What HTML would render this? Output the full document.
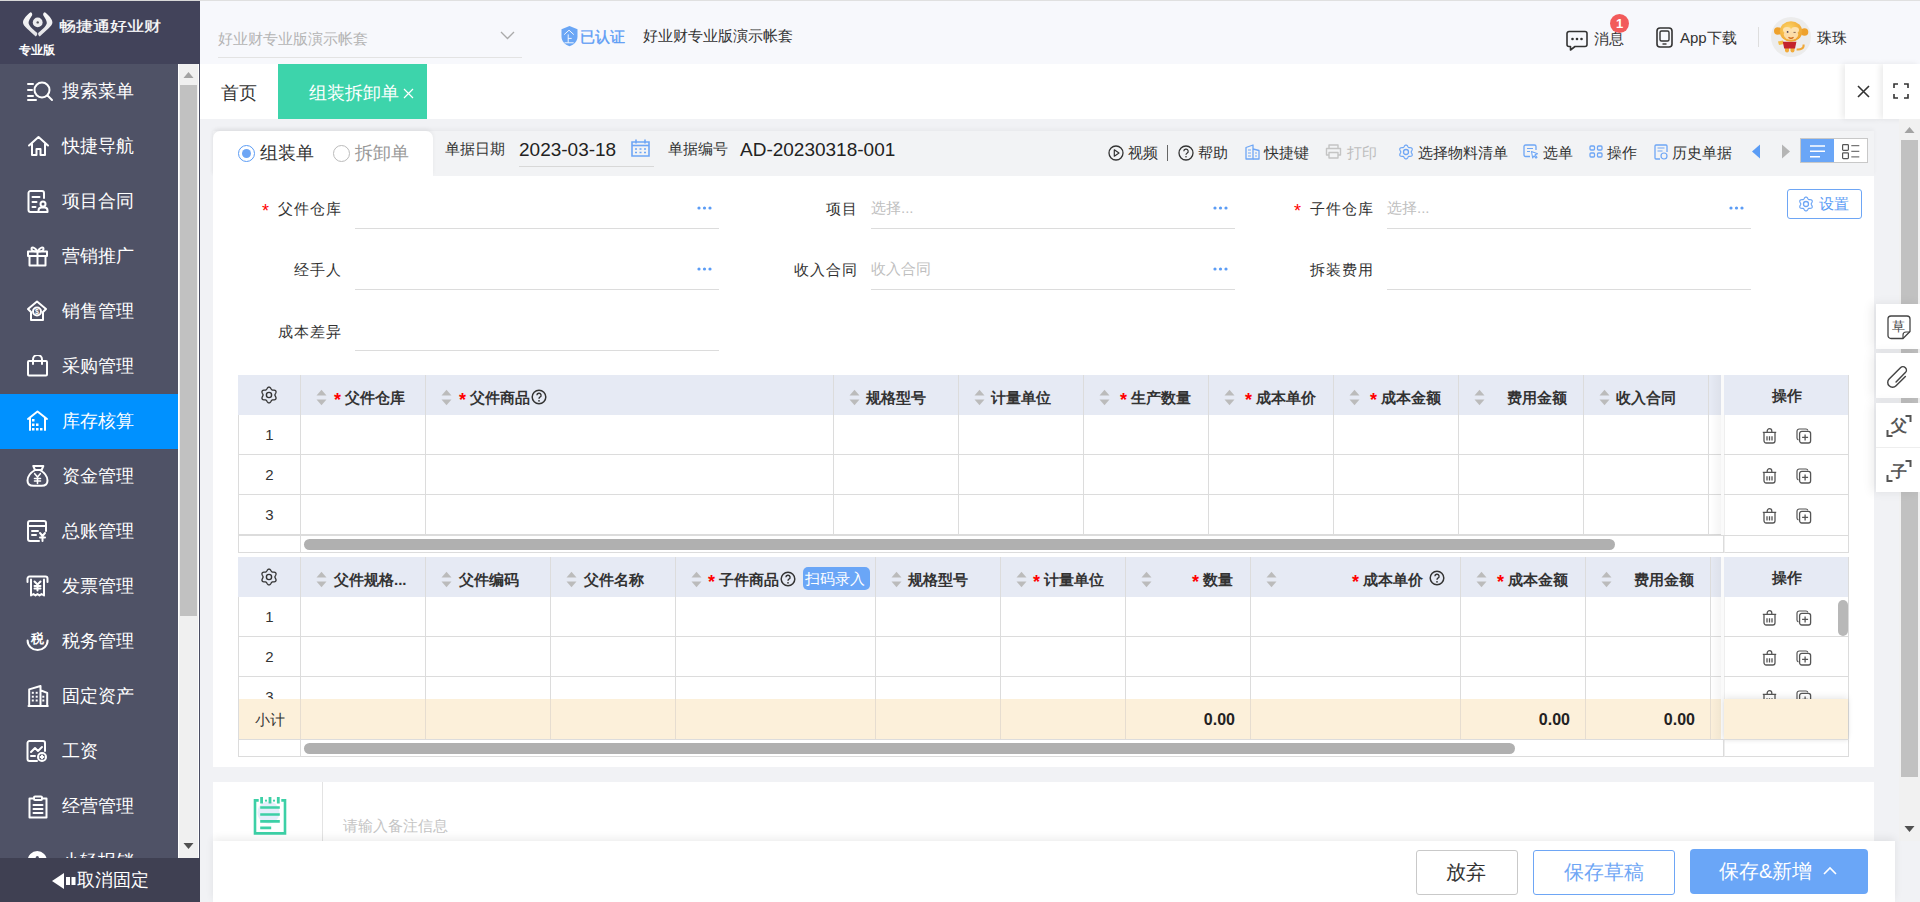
<!DOCTYPE html>
<html><head><meta charset="utf-8">
<style>
*{box-sizing:border-box;margin:0;padding:0}
html,body{width:1920px;height:902px;overflow:hidden;background:#f1f2f5;font-family:"Liberation Sans",sans-serif;color:#333}
.a{position:absolute}
.t{position:absolute;white-space:nowrap;line-height:1}
svg{display:block}
/* sidebar */
#side{left:0;top:0;width:200px;height:902px;background:#4f5266}
#logo{left:0;top:0;width:200px;height:64px;background:#42435a;border-top:1px solid #d8d8d8}
.mi{position:absolute;left:0;width:178px;height:55px;color:#fff;font-size:18px}
.mi .tx{position:absolute;left:62px;top:17px;line-height:20px}
.mi svg{position:absolute;left:26px;top:16px}
.mi.act{background:#0091ff}
#sbar{left:178px;top:64px;width:21px;height:794px;background:#f0f0f0;border-left:1px solid #fff;border-right:1px solid #fff}
#sline{left:199px;top:64px;width:1px;height:838px;background:#4b4e63}
#unpin{left:0;top:858px;width:200px;height:44px;background:#3f4052;color:#fff;font-size:19px}
/* header */
#hdr{left:200px;top:0;width:1720px;height:64px;background:#f7f8fc;border-top:1px solid #e0e0e0}
#tabs{left:200px;top:64px;width:1720px;height:55px;background:#fff}
/* content */
#card{left:213px;top:176px;width:1661px;height:591px;background:#fff}
#tb{left:213px;top:131px;width:1661px;height:45px;background:#f2f3f5;box-shadow:0 -2px 4px rgba(0,0,0,0.04)}
#tbw{left:213px;top:131px;width:220px;height:45px;background:#fff;border-radius:7px 7px 0 0;box-shadow:0 -2px 4px rgba(0,0,0,0.05)}
.lb{position:absolute;font-size:15px;color:#333;text-align:right;line-height:16px}
.ul{position:absolute;height:1px;background:#dcdcdc}
.dots{position:absolute;font-size:15px;color:#6a9ff5;letter-spacing:0}
.ph{position:absolute;font-size:15px;color:#bfbfbf;line-height:16px}
.req{color:#f00}
/* tables */
.tbl{position:absolute;left:238px;width:1611px;background:#fff;border-left:1px solid #dcdcdc;border-right:1px solid #dcdcdc}
.th{position:absolute;top:0;height:40px;background:#e6eaf4}
.vl{position:absolute;width:1px;background:#dcdcdc}
.hl{position:absolute;height:1px;background:#dcdcdc}
.hd{position:absolute;font-size:15px;font-weight:bold;color:#333;line-height:16px;white-space:nowrap}
.sort{position:absolute;width:10px;height:16px}
.num{position:absolute;font-size:15px;color:#333;line-height:16px;width:62px;text-align:center}
</style></head><body>
<!-- SIDEBAR -->
<div id="side" class="a"></div>
<div id="logo" class="a"></div>
<div id="sbar" class="a"></div>
<div id="sline" class="a"></div>
<div id="unpin" class="a"></div>
<div id="menu" class="a" style="left:0;top:64px;width:178px;height:794px;overflow:hidden">
<div class="mi" style="top:0px"><svg width="28" height="22" viewBox="0 0 28 22"><g stroke="#fff" stroke-width="2" fill="none" stroke-linecap="round" stroke-linejoin="round"><path d="M2 4h5M2 10h4M2 16h5M2 20h8"/><circle cx="16" cy="10" r="7.5"/><path d="M21.5 15.5l4.5 4.5"/></g></svg><span class="tx">搜索菜单</span></div>
<div class="mi" style="top:55px"><svg width="28" height="22" viewBox="0 0 28 22"><g stroke="#fff" stroke-width="2" fill="none" stroke-linecap="round" stroke-linejoin="round"><path d="M3 10.5L12.5 2 22 10.5M6 9v11h4.5v-6h4v6H19V9"/></g></svg><span class="tx">快捷导航</span></div>
<div class="mi" style="top:110px"><svg width="28" height="24" viewBox="0 0 28 24"><g stroke="#fff" stroke-width="2" fill="none" stroke-linecap="round" stroke-linejoin="round"><path d="M14 22H4.5a2 2 0 0 1-2-2V3a2 2 0 0 1 2-2H16a2 2 0 0 1 2 2v5"/><path d="M6.5 7h7M6.5 12h4M6.5 17h3"/><circle cx="17" cy="14" r="2.5"/><path d="M12.5 22v-1.5a3 3 0 0 1 3-3h3a3 3 0 0 1 3 3V22z"/></g></svg><span class="tx">项目合同</span></div>
<div class="mi" style="top:165px"><svg width="28" height="22" viewBox="0 0 28 22"><g stroke="#fff" stroke-width="2" fill="none" stroke-linecap="round" stroke-linejoin="round"><rect x="2" y="6.5" width="19" height="4.5"/><path d="M3.5 11v9.5h16V11M11.5 6.5v14"/><path d="M11.5 6.5C9 2 5.5 1.5 5.5 4S9 6.5 11.5 6.5C14 2 17.5 1.5 17.5 4S14 6.5 11.5 6.5"/></g></svg><span class="tx">营销推广</span></div>
<div class="mi" style="top:220px"><svg width="28" height="22" viewBox="0 0 28 22"><g stroke="#fff" stroke-width="2" fill="none" stroke-linecap="round" stroke-linejoin="round"><path d="M11 1.5L2 9l3 3v8h12v-8l3-3z"/><circle cx="11" cy="11.5" r="4"/></g><text x="11" y="14" font-size="7" font-weight="bold" fill="#fff" text-anchor="middle" font-family="Liberation Sans">$</text></svg><span class="tx">销售管理</span></div>
<div class="mi" style="top:275px"><svg width="28" height="22" viewBox="0 0 28 22"><g stroke="#fff" stroke-width="2" fill="none" stroke-linecap="round" stroke-linejoin="round"><rect x="2" y="6" width="19" height="14.5" rx="1"/><path d="M7 9V4.5a4.5 4.5 0 0 1 9 0V9"/></g></svg><span class="tx">采购管理</span></div>
<div class="mi act" style="top:330px"><svg width="28" height="22" viewBox="0 0 28 22"><g stroke="#fff" stroke-width="2" fill="none" stroke-linecap="round" stroke-linejoin="round"><path d="M2 9l9.5-7.5L21 9M4 8v12M19 8v12"/></g><g fill="#fff"><rect x="6" y="9" width="2.5" height="2.5"/><rect x="6" y="13.5" width="2.5" height="2.5"/><rect x="10" y="13.5" width="2.5" height="2.5"/><rect x="6" y="18" width="2.5" height="2.5"/><rect x="10" y="18" width="2.5" height="2.5"/><rect x="14" y="18" width="2.5" height="2.5"/></g></svg><span class="tx">库存核算</span></div>
<div class="mi" style="top:385px"><svg width="28" height="22" viewBox="0 0 28 22"><g stroke="#fff" stroke-width="2" fill="none" stroke-linecap="round" stroke-linejoin="round"><path d="M9 5L7.3 1h10l-1.7 4z"/><path d="M9 5C4 8 1.5 12 1.5 15.5c0 3.5 2.5 5.3 6 5.3h8c3.5 0 6-1.8 6-5.3 0-3.5-2.5-7.5-7.5-10.5z"/><path d="M8.7 8.7l2.8 3.3 2.8-3.3M11.5 12v6.5M8.5 13.5h6M8.5 16h6" stroke-width="1.6"/></g></svg><span class="tx">资金管理</span></div>
<div class="mi" style="top:440px"><svg width="28" height="22" viewBox="0 0 28 22"><g stroke="#fff" stroke-width="2" fill="none" stroke-linecap="round" stroke-linejoin="round"><path d="M13 21H4a2 2 0 0 1-2-2V3a2 2 0 0 1 2-2h14a2 2 0 0 1 2 2v8M2 6h18M6 11h6M6 15h4"/><path d="M14 13l2.5 3 2.5-3M16.5 16v5M14 17.5h5"/></g></svg><span class="tx">总账管理</span></div>
<div class="mi" style="top:495px"><svg width="28" height="22" viewBox="0 0 28 22"><g stroke="#fff" stroke-width="2" fill="none" stroke-linecap="round" stroke-linejoin="round"><path d="M1.5 7V3.5a2 2 0 0 1 2-2h16a2 2 0 0 1 2 2V7M5 4.5v16l2.5-1.5 2 1.5 2-1.5 2 1.5 2-1.5 2.5 1.5v-16"/><path d="M8.5 6.5l3 3 3-3M11.5 9.5v6M8.5 11h6M8.5 13.5h6"/></g></svg><span class="tx">发票管理</span></div>
<div class="mi" style="top:550px"><svg width="28" height="22" viewBox="0 0 28 22"><g stroke="#fff" stroke-width="2" fill="none" stroke-linecap="round" stroke-linejoin="round"><path d="M1.6 10.5a10 9.5 0 0 0 20 0"/></g><text x="11.6" y="12.6" font-size="13" font-weight="bold" fill="#fff" text-anchor="middle">税</text></svg><span class="tx">税务管理</span></div>
<div class="mi" style="top:605px"><svg width="28" height="22" viewBox="0 0 28 22"><g stroke="#fff" stroke-width="2" fill="none" stroke-linecap="round" stroke-linejoin="round"><path d="M3.2 21V4.4L14.5 1v20M14.5 5.3l6.7 2.6V21M2.5 21h19.3"/></g><g fill="#fff"><rect x="5.8" y="6.8" width="2" height="2"/><rect x="9.7" y="6.8" width="2" height="2"/><rect x="5.8" y="10.7" width="2" height="2"/><rect x="9.7" y="10.7" width="2" height="2"/><rect x="5.8" y="14.5" width="2" height="2"/><rect x="9.7" y="14.5" width="2" height="2"/><rect x="16.3" y="10.7" width="2" height="2"/><rect x="16.3" y="14.5" width="2" height="2"/></g></svg><span class="tx">固定资产</span></div>
<div class="mi" style="top:660px"><svg width="28" height="22" viewBox="0 0 28 22"><g stroke="#fff" stroke-width="2" fill="none" stroke-linecap="round" stroke-linejoin="round"><path d="M11 21H3.5a2 2 0 0 1-2-2V3a2 2 0 0 1 2-2H17a2 2 0 0 1 2 2v8"/><path d="M5 12l4-4 3 3 4-4M5 16h4"/><circle cx="16" cy="17" r="4"/><path d="M14.5 17h3M16 15.5v3"/></g></svg><span class="tx">工资</span></div>
<div class="mi" style="top:715px"><svg width="28" height="24" viewBox="0 0 28 24"><g stroke="#fff" stroke-width="2" fill="none" stroke-linecap="round" stroke-linejoin="round"><path d="M7 3.5H3.5v19h17v-19H17"/><rect x="8" y="1.5" width="8" height="3.5" rx="1"/><path d="M7.5 10h9M7.5 14h9M7.5 18h9"/></g></svg><span class="tx">经营管理</span></div>
<div class="mi" style="top:770px"><svg width="28" height="22" viewBox="0 0 28 22"><path d="M1.5 11.5a9.75 10.5 0 0 1 19.5 0V14H1.5z" fill="#fff"/><circle cx="11.3" cy="7.5" r="1.6" fill="#4f5266"/></svg><span class="tx">小轻报销</span></div>

</div>
<!-- logo -->
<svg class="a" style="left:18px;top:8px" width="40" height="32" viewBox="0 0 40 32"><defs><linearGradient id="lg" x1="0" y1="0" x2="0" y2="1"><stop offset="0" stop-color="#fafafa"/><stop offset="1" stop-color="#e2e2e6"/></linearGradient></defs><path d="M12.50 4.30C9.00 7.00 5.00 11.00 5.00 14.50C5.00 18.00 12.00 23.00 17.70 28.40C19.50 27.50 19.50 25.50 19.00 24.80C14.00 20.50 10.60 17.00 10.60 14.90C10.60 12.00 13.50 9.00 14.20 7.10C14.50 5.50 13.50 4.30 12.50 4.30Z" fill="url(#lg)"/><path d="M26.90 4.30C30.40 7.00 34.40 11.00 34.40 14.50C34.40 18.00 27.40 23.00 21.70 28.40C19.90 27.50 19.90 25.50 20.40 24.80C25.40 20.50 28.80 17.00 28.80 14.90C28.80 12.00 25.90 9.00 25.20 7.10C24.90 5.50 25.90 4.30 26.90 4.30Z" fill="url(#lg)"/><circle cx="19.7" cy="14.4" r="4.9" fill="#ececef"/><circle cx="19.7" cy="14.4" r="1.2" fill="#55555c"/></svg>
<span class="t" style="left:59px;top:18px;font-size:17px;color:#fff;transform:scaleY(0.82);transform-origin:0 50%;-webkit-text-stroke:0.3px #fff">畅捷通好业财</span>
<span class="t" style="left:19px;top:44px;font-size:12px;color:#fff;font-weight:bold">专业版</span>
<!-- sidebar scrollbar -->
<div class="a" style="left:180px;top:85px;width:17px;height:531px;background:#c1c1c1"></div>
<svg class="a" style="left:183px;top:71px" width="11" height="8"><path d="M0.5 7L5.5 1 10.5 7z" fill="#a3a3a3"/></svg>
<svg class="a" style="left:183px;top:842px" width="11" height="8"><path d="M0.5 1L5.5 7 10.5 1z" fill="#505050"/></svg>
<!-- unpin -->
<svg class="a" style="left:52px;top:872px" width="24" height="18"><path d="M0 9L12 1v16z" fill="#fff"/><rect x="14" y="5" width="4" height="8" fill="#fff"/><rect x="19.5" y="5" width="4" height="8" fill="#fff"/></svg>
<span class="t" style="left:77px;top:871px;font-size:18px;color:#fff">取消固定</span>

<!-- HEADER -->
<div id="hdr" class="a"></div>
<div id="tabs" class="a"></div>

<!-- header content -->
<span class="t" style="left:218px;top:31px;font-size:15px;color:#b4b4b4">好业财专业版演示帐套</span>
<div class="a" style="left:218px;top:57px;width:304px;height:1px;background:#e3e3e3"></div>
<svg class="a" style="left:500px;top:31px" width="15" height="9"><path d="M1 1l6.5 6.5L14 1" stroke="#aaa" stroke-width="1.3" fill="none"/></svg>
<svg class="a" style="left:559px;top:25px" width="20" height="22" viewBox="0 0 20 22"><path d="M10.5 1L18.5 4.3v7.2c0 4.8-3.3 8.3-8 9.7C5.8 19.8 2.5 16.3 2.5 11.5V4.3z" fill="#6aa6f5"/><path d="M5.2 9.6L10 5.2l4.8 4.4M9.2 9.4v8.3M5.5 17.8h9.2M9.2 13.4h3.5" stroke="#fff" stroke-width="0.9" fill="none"/></svg>
<span class="t" style="left:580px;top:29px;font-size:15px;color:#5c9cf5;-webkit-text-stroke:0.4px #5c9cf5">已认证</span>
<span class="t" style="left:643px;top:28px;font-size:15px;color:#333">好业财专业版演示帐套</span>
<!-- right header -->
<svg class="a" style="left:1566px;top:30px" width="22" height="21" viewBox="0 0 22 21"><path d="M3 1.5h16a2 2 0 0 1 2 2v11a2 2 0 0 1-2 2H9l-4.5 3.5v-3.5H3a2 2 0 0 1-2-2v-11a2 2 0 0 1 2-2z" stroke="#333" stroke-width="1.6" fill="none" stroke-linejoin="round"/><circle cx="6.5" cy="9" r="1.3" fill="#333"/><circle cx="11" cy="9" r="1.3" fill="#333"/><circle cx="15.5" cy="9" r="1.3" fill="#333"/></svg>
<span class="t" style="left:1594px;top:31px;font-size:15px;color:#333">消息</span>
<div class="a" style="left:1610px;top:14px;width:19px;height:19px;border-radius:50%;background:#f25b5b;color:#fff;font-size:13px;font-weight:bold;text-align:center;line-height:19px">1</div>
<svg class="a" style="left:1656px;top:27px" width="17" height="21" viewBox="0 0 17 21"><rect x="1" y="1" width="15" height="19" rx="3" stroke="#333" stroke-width="1.6" fill="none"/><rect x="4" y="4" width="9" height="10" rx="1.5" stroke="#333" stroke-width="1.4" fill="none"/><path d="M6.5 17h4" stroke="#333" stroke-width="1.4"/></svg>
<span class="t" style="left:1680px;top:30px;font-size:15px;color:#333">App下载</span>
<div class="a" style="left:1758px;top:27px;width:1px;height:20px;background:#dedede"></div>
<svg class="a" style="left:1768px;top:14px" width="46" height="46" viewBox="0 0 46 46"><defs><radialGradient id="mk" cx="0.4" cy="0.35" r="0.7"><stop offset="0" stop-color="#fcd468"/><stop offset="1" stop-color="#eea12c"/></radialGradient></defs><circle cx="23" cy="23" r="20" fill="#ececec"/><path d="M28.6 35.5c4 0.5 7.5-1 7-5" stroke="#f0a838" stroke-width="2" fill="none"/><rect x="17" y="32" width="4" height="6.5" rx="2" fill="#f2ab3a"/><rect x="22.5" y="32" width="4" height="6.5" rx="2" fill="#f2ab3a"/><path d="M10 27.5l5-1 1 3.5-5 1z" fill="#f5bd45"/><path d="M14.8 27.8h13.6l-1.4 6.6H16.2z" fill="#c3222c"/><circle cx="9.8" cy="17" r="3.8" fill="#eea12c"/><circle cx="36.5" cy="18" r="3.8" fill="#eea12c"/><ellipse cx="23" cy="17.5" rx="11.2" ry="10.3" fill="url(#mk)"/><ellipse cx="23" cy="20.5" rx="7.2" ry="5.2" fill="#fcdca8"/><ellipse cx="19" cy="16" rx="4" ry="3" fill="#fde2b0"/><ellipse cx="27" cy="16" rx="4" ry="3" fill="#fde2b0"/><circle cx="19.6" cy="17.9" r="0.9" fill="#4a3a50"/><path d="M25.5 18.4h2.2" stroke="#6a4a40" stroke-width="0.8"/><path d="M20.5 23.2q2.5 2.4 5 0" stroke="#d06a20" stroke-width="1.2" fill="#f7c070"/></svg>
<span class="t" style="left:1817px;top:30px;font-size:15px;color:#333">珠珠</span>
<!-- tabs -->
<span class="t" style="left:221px;top:84px;font-size:18px;color:#333">首页</span>
<div class="a" style="left:278px;top:64px;width:149px;height:55px;background:#3dd4ab"></div>
<span class="t" style="left:309px;top:84px;font-size:18px;color:#fff">组装拆卸单</span>
<svg class="a" style="left:403px;top:88px" width="11" height="11"><path d="M1 1l9 9M10 1l-9 9" stroke="#fff" stroke-width="1.2"/></svg>
<div class="a" style="left:1845px;top:64px;width:38px;height:55px;background:#fff;box-shadow:-3px 0 6px rgba(0,0,0,0.08)"></div>
<div class="a" style="left:1883px;top:64px;width:37px;height:55px;background:#fff;box-shadow:-3px 0 6px rgba(0,0,0,0.08)"></div>
<svg class="a" style="left:1857px;top:85px" width="13" height="13"><path d="M1 1l11 11M12 1L1 12" stroke="#333" stroke-width="1.6"/></svg>
<svg class="a" style="left:1893px;top:83px" width="16" height="16"><path d="M1 5V1h4M11 1h4v4M15 11v4h-4M5 15H1v-4" stroke="#333" stroke-width="1.6" fill="none"/></svg>

<div id="tb" class="a"></div>
<div id="tbw" class="a"></div>
<div id="card" class="a"></div>

<!-- toolbar -->
<div class="a" style="left:238px;top:145px;width:17px;height:17px;border-radius:50%;border:1px solid #5b9cf5;background:#fff"></div>
<div class="a" style="left:242px;top:149px;width:9px;height:9px;border-radius:50%;background:#6ea6f5"></div>
<span class="t" style="left:260px;top:144px;font-size:18px;color:#333">组装单</span>
<div class="a" style="left:333px;top:145px;width:17px;height:17px;border-radius:50%;border:1px solid #bbb;background:#fff"></div>
<span class="t" style="left:355px;top:144px;font-size:18px;color:#999">拆卸单</span>
<span class="t" style="left:445px;top:141px;font-size:15px;color:#333">单据日期</span>
<span class="t" style="left:519px;top:140px;font-size:19px;color:#222">2023-03-18</span>
<svg class="a" style="left:631px;top:139px" width="19" height="18" viewBox="0 0 19 18"><path d="M1 3h17v14H1z" stroke="#6ea6f5" stroke-width="1.6" fill="none"/><path d="M1 6.5h17" stroke="#6ea6f5" stroke-width="1.6"/><path d="M5 0.5v4M14 0.5v4" stroke="#6ea6f5" stroke-width="1.6"/><path d="M4 10h2M8.5 10h2M13 10h2M4 13.5h2M8.5 13.5h2M13 13.5h2" stroke="#6ea6f5" stroke-width="1.4"/></svg>
<div class="a" style="left:519px;top:166px;width:135px;height:1px;background:#d8d8d8"></div>
<span class="t" style="left:668px;top:141px;font-size:15px;color:#333">单据编号</span>
<span class="t" style="left:740px;top:140px;font-size:19px;color:#222">AD-20230318-001</span>
<!-- right tools -->
<svg class="a" style="left:1108px;top:145px" width="16" height="16" viewBox="0 0 16 16"><circle cx="8" cy="8" r="7" stroke="#333" stroke-width="1.3" fill="none"/><path d="M6.3 4.8v6.4L11 8z" stroke="#333" stroke-width="1.2" fill="none" stroke-linejoin="round"/></svg>
<span class="t" style="left:1128px;top:145px;font-size:15px;color:#333">视频</span>
<div class="a" style="left:1167px;top:145px;width:1px;height:16px;background:#666"></div>
<svg class="a" style="left:1178px;top:145px" width="16" height="16" viewBox="0 0 16 16"><circle cx="8" cy="8" r="7" stroke="#333" stroke-width="1.3" fill="none"/><path d="M5.8 6.2a2.2 2.2 0 1 1 3.2 2c-0.7 0.4-1 0.8-1 1.6" stroke="#333" stroke-width="1.2" fill="none"/><circle cx="8" cy="11.8" r="0.8" fill="#333"/></svg>
<span class="t" style="left:1198px;top:145px;font-size:15px;color:#333">帮助</span>
<svg class="a" style="left:1245px;top:144px" width="15" height="16" viewBox="0 0 15 16"><path d="M1 3.5L8 1v14H1z" stroke="#6ea6f5" stroke-width="1.3" fill="none" stroke-linejoin="round"/><path d="M8 5l6 1.5V15H8" stroke="#6ea6f5" stroke-width="1.3" fill="none" stroke-linejoin="round"/><path d="M3 6h3M3 9h3M3 12h3M10 9h2M10 12h2" stroke="#6ea6f5" stroke-width="1"/></svg>
<span class="t" style="left:1264px;top:145px;font-size:15px;color:#333">快捷键</span>
<svg class="a" style="left:1325px;top:144px" width="17" height="15" viewBox="0 0 17 15"><path d="M4 4.5V1h9v3.5M4 11H1.5V4.5h14V11H13M4 8.5h9V14H4z" stroke="#c4c4c4" stroke-width="1.4" fill="none" stroke-linejoin="round"/></svg>
<span class="t" style="left:1347px;top:145px;font-size:15px;color:#bdbdbd">打印</span>
<svg class="a" style="left:1398px;top:144px" width="16" height="16" viewBox="0 0 16 16"><path d="M13.20 8.00L13.24 8.27L13.34 8.56L13.50 8.87L13.69 9.21L13.89 9.58L14.07 9.97L14.19 10.38L14.24 10.78L14.20 11.16L14.06 11.50L13.83 11.79L13.52 12.01L13.15 12.17L12.74 12.27L12.31 12.31L11.90 12.33L11.51 12.33L11.16 12.35L10.86 12.40L10.60 12.50L10.38 12.67L10.18 12.91L10.00 13.20L9.80 13.54L9.58 13.89L9.33 14.24L9.04 14.55L8.71 14.79L8.36 14.95L8.00 15.00L7.64 14.95L7.29 14.79L6.96 14.55L6.67 14.24L6.42 13.89L6.20 13.54L6.00 13.20L5.82 12.91L5.62 12.67L5.40 12.50L5.14 12.40L4.84 12.35L4.49 12.33L4.10 12.33L3.69 12.31L3.26 12.27L2.85 12.17L2.48 12.01L2.17 11.79L1.94 11.50L1.80 11.16L1.76 10.78L1.81 10.38L1.93 9.97L2.11 9.58L2.31 9.21L2.50 8.87L2.66 8.56L2.76 8.27L2.80 8.00L2.76 7.73L2.66 7.44L2.50 7.13L2.31 6.79L2.11 6.42L1.93 6.03L1.81 5.62L1.76 5.22L1.80 4.84L1.94 4.50L2.17 4.21L2.48 3.99L2.85 3.83L3.26 3.73L3.69 3.69L4.10 3.67L4.49 3.67L4.84 3.65L5.14 3.60L5.40 3.50L5.62 3.33L5.82 3.09L6.00 2.80L6.20 2.46L6.42 2.11L6.67 1.76L6.96 1.45L7.29 1.21L7.64 1.05L8.00 1.00L8.36 1.05L8.71 1.21L9.04 1.45L9.33 1.76L9.58 2.11L9.80 2.46L10.00 2.80L10.18 3.09L10.38 3.33L10.60 3.50L10.86 3.60L11.16 3.65L11.51 3.67L11.90 3.67L12.31 3.69L12.74 3.73L13.15 3.83L13.52 3.99L13.83 4.21L14.06 4.50L14.20 4.84L14.24 5.22L14.19 5.62L14.07 6.03L13.89 6.42L13.69 6.79L13.50 7.13L13.34 7.44L13.24 7.73Z" stroke="#6ea6f5" stroke-width="1.2" fill="none" stroke-linejoin="round"/><circle cx="8" cy="8" r="2.5" stroke="#6ea6f5" stroke-width="1.3" fill="none"/></svg>
<span class="t" style="left:1418px;top:145px;font-size:15px;color:#333">选择物料清单</span>
<svg class="a" style="left:1523px;top:144px" width="16" height="16" viewBox="0 0 16 16"><path d="M7 12.5H2.5a1.5 1.5 0 0 1-1.5-1.5V2.5A1.5 1.5 0 0 1 2.5 1h9A1.5 1.5 0 0 1 13 2.5V6" stroke="#6ea6f5" stroke-width="1.3" fill="none"/><path d="M4 4.5h6M4 7.5h3" stroke="#6ea6f5" stroke-width="1.2"/><path d="M8.5 7.5l6 2.3-2.5 1 2 2.5-1 0.9-2-2.4-1.3 2.2z" stroke="#6ea6f5" stroke-width="1.1" fill="#fff" stroke-linejoin="round"/></svg>
<span class="t" style="left:1543px;top:145px;font-size:15px;color:#333">选单</span>
<svg class="a" style="left:1589px;top:145px" width="14" height="13" viewBox="0 0 14 13"><rect x="1" y="1" width="4.5" height="4" rx="1" stroke="#6ea6f5" stroke-width="1.3" fill="none"/><rect x="8.5" y="1" width="4.5" height="4" rx="1" stroke="#6ea6f5" stroke-width="1.3" fill="none"/><rect x="1" y="8" width="4.5" height="4" rx="1" stroke="#6ea6f5" stroke-width="1.3" fill="none"/><rect x="8.5" y="8" width="4.5" height="4" rx="1" stroke="#6ea6f5" stroke-width="1.3" fill="none"/></svg>
<span class="t" style="left:1607px;top:145px;font-size:15px;color:#333">操作</span>
<svg class="a" style="left:1654px;top:144px" width="14" height="16" viewBox="0 0 14 16"><path d="M6 15H2a1 1 0 0 1-1-1V2a1 1 0 0 1 1-1h10a1 1 0 0 1 1 1v6" stroke="#6ea6f5" stroke-width="1.3" fill="none"/><path d="M3.5 4h7M3.5 7h5" stroke="#6ea6f5" stroke-width="1.1"/><circle cx="10" cy="12" r="3" stroke="#6ea6f5" stroke-width="1.2" fill="none"/></svg>
<span class="t" style="left:1672px;top:145px;font-size:15px;color:#333">历史单据</span>
<svg class="a" style="left:1751px;top:144px" width="10" height="15"><path d="M9 0.5v14L1 7.5z" fill="#5b9cf5"/></svg>
<svg class="a" style="left:1781px;top:144px" width="10" height="15"><path d="M1 0.5v14l8-7z" fill="#b5b5b5"/></svg>
<div class="a" style="left:1800px;top:138px;width:68px;height:25px;border:1px solid #c8c8c8;background:#fff"></div>
<div class="a" style="left:1801px;top:139px;width:33px;height:23px;background:#6aa6f7"></div>
<svg class="a" style="left:1808px;top:144px" width="20" height="15"><path d="M2 2h15M2 7.3h15M2 12.8h10" stroke="#fff" stroke-width="1.5"/></svg>
<svg class="a" style="left:1841px;top:143px" width="20" height="17"><rect x="1.6" y="1.6" width="5.8" height="5.8" rx="0.8" stroke="#555" stroke-width="1.2" fill="none"/><rect x="1.6" y="9.8" width="5.8" height="5.8" rx="0.8" stroke="#555" stroke-width="1.2" fill="none"/><path d="M10.3 2.7h8M10.3 8.3h8M10.3 13.8h8" stroke="#777" stroke-width="1.3"/></svg>
<!-- form -->
<span class="t" style="left:278px;top:201px;font-size:15px;color:#333;letter-spacing:1px">父件仓库</span>
<span class="t" style="left:262px;top:202px;font-size:18px;color:#f00">*</span>
<svg class="a" style="left:697px;top:206px" width="16" height="4"><circle cx="2" cy="2" r="1.6" fill="#5b9cf5"/><circle cx="7.5" cy="2" r="1.6" fill="#5b9cf5"/><circle cx="13" cy="2" r="1.6" fill="#5b9cf5"/></svg>
<div class="a" style="left:355px;top:228px;width:364px;height:1px;background:#dcdcdc"></div>
<span class="t" style="left:826px;top:201px;font-size:15px;color:#333;letter-spacing:1px">项目</span>
<span class="t" style="left:871px;top:200px;font-size:15px;color:#bfbfbf">选择...</span>
<svg class="a" style="left:1213px;top:206px" width="16" height="4"><circle cx="2" cy="2" r="1.6" fill="#5b9cf5"/><circle cx="7.5" cy="2" r="1.6" fill="#5b9cf5"/><circle cx="13" cy="2" r="1.6" fill="#5b9cf5"/></svg>
<div class="a" style="left:871px;top:228px;width:364px;height:1px;background:#dcdcdc"></div>
<span class="t" style="left:1310px;top:201px;font-size:15px;color:#333;letter-spacing:1px">子件仓库</span>
<span class="t" style="left:1294px;top:202px;font-size:18px;color:#f00">*</span>
<span class="t" style="left:1387px;top:200px;font-size:15px;color:#bfbfbf">选择...</span>
<svg class="a" style="left:1729px;top:206px" width="16" height="4"><circle cx="2" cy="2" r="1.6" fill="#5b9cf5"/><circle cx="7.5" cy="2" r="1.6" fill="#5b9cf5"/><circle cx="13" cy="2" r="1.6" fill="#5b9cf5"/></svg>
<div class="a" style="left:1387px;top:228px;width:364px;height:1px;background:#dcdcdc"></div>
<span class="t" style="left:294px;top:262px;font-size:15px;color:#333;letter-spacing:1px">经手人</span>
<svg class="a" style="left:697px;top:267px" width="16" height="4"><circle cx="2" cy="2" r="1.6" fill="#5b9cf5"/><circle cx="7.5" cy="2" r="1.6" fill="#5b9cf5"/><circle cx="13" cy="2" r="1.6" fill="#5b9cf5"/></svg>
<div class="a" style="left:355px;top:289px;width:364px;height:1px;background:#dcdcdc"></div>
<span class="t" style="left:794px;top:262px;font-size:15px;color:#333;letter-spacing:1px">收入合同</span>
<span class="t" style="left:871px;top:261px;font-size:15px;color:#bfbfbf">收入合同</span>
<svg class="a" style="left:1213px;top:267px" width="16" height="4"><circle cx="2" cy="2" r="1.6" fill="#5b9cf5"/><circle cx="7.5" cy="2" r="1.6" fill="#5b9cf5"/><circle cx="13" cy="2" r="1.6" fill="#5b9cf5"/></svg>
<div class="a" style="left:871px;top:289px;width:364px;height:1px;background:#dcdcdc"></div>
<span class="t" style="left:1310px;top:262px;font-size:15px;color:#333;letter-spacing:1px">拆装费用</span>
<div class="a" style="left:1387px;top:289px;width:364px;height:1px;background:#dcdcdc"></div>
<span class="t" style="left:278px;top:324px;font-size:15px;color:#333;letter-spacing:1px">成本差异</span>
<div class="a" style="left:355px;top:350px;width:364px;height:1px;background:#dcdcdc"></div>
<div class="a" style="left:1787px;top:189px;width:75px;height:30px;border:1px solid #6ea6f5;border-radius:3px;background:#fff"></div>
<svg class="a" style="left:1798px;top:196px" width="16" height="16" viewBox="0 0 16 16"><path d="M13.20 8.00L13.24 8.27L13.34 8.56L13.50 8.87L13.69 9.21L13.89 9.58L14.07 9.97L14.19 10.38L14.24 10.78L14.20 11.16L14.06 11.50L13.83 11.79L13.52 12.01L13.15 12.17L12.74 12.27L12.31 12.31L11.90 12.33L11.51 12.33L11.16 12.35L10.86 12.40L10.60 12.50L10.38 12.67L10.18 12.91L10.00 13.20L9.80 13.54L9.58 13.89L9.33 14.24L9.04 14.55L8.71 14.79L8.36 14.95L8.00 15.00L7.64 14.95L7.29 14.79L6.96 14.55L6.67 14.24L6.42 13.89L6.20 13.54L6.00 13.20L5.82 12.91L5.62 12.67L5.40 12.50L5.14 12.40L4.84 12.35L4.49 12.33L4.10 12.33L3.69 12.31L3.26 12.27L2.85 12.17L2.48 12.01L2.17 11.79L1.94 11.50L1.80 11.16L1.76 10.78L1.81 10.38L1.93 9.97L2.11 9.58L2.31 9.21L2.50 8.87L2.66 8.56L2.76 8.27L2.80 8.00L2.76 7.73L2.66 7.44L2.50 7.13L2.31 6.79L2.11 6.42L1.93 6.03L1.81 5.62L1.76 5.22L1.80 4.84L1.94 4.50L2.17 4.21L2.48 3.99L2.85 3.83L3.26 3.73L3.69 3.69L4.10 3.67L4.49 3.67L4.84 3.65L5.14 3.60L5.40 3.50L5.62 3.33L5.82 3.09L6.00 2.80L6.20 2.46L6.42 2.11L6.67 1.76L6.96 1.45L7.29 1.21L7.64 1.05L8.00 1.00L8.36 1.05L8.71 1.21L9.04 1.45L9.33 1.76L9.58 2.11L9.80 2.46L10.00 2.80L10.18 3.09L10.38 3.33L10.60 3.50L10.86 3.60L11.16 3.65L11.51 3.67L11.90 3.67L12.31 3.69L12.74 3.73L13.15 3.83L13.52 3.99L13.83 4.21L14.06 4.50L14.20 4.84L14.24 5.22L14.19 5.62L14.07 6.03L13.89 6.42L13.69 6.79L13.50 7.13L13.34 7.44L13.24 7.73Z" stroke="#6ea6f5" stroke-width="1.2" fill="none" stroke-linejoin="round"/><circle cx="8" cy="8" r="2.5" stroke="#6ea6f5" stroke-width="1.3" fill="none"/></svg>
<span class="t" style="left:1819px;top:196px;font-size:15px;color:#5b9cf5">设置</span>

<!-- TABLES -->
<div class="a" style="left:238px;top:375px;width:1611px;height:178px;background:#fff;border:1px solid #dcdcdc;border-top:none"></div>
<div class="a" style="left:238px;top:375px;width:1611px;height:40px;background:#e6eaf4"></div>
<div class="a" style="left:238px;top:454px;width:1611px;height:1px;background:#dcdcdc"></div>
<div class="a" style="left:238px;top:494px;width:1611px;height:1px;background:#dcdcdc"></div>
<div class="a" style="left:238px;top:534px;width:1611px;height:1px;background:#dcdcdc"></div>
<div class="a" style="left:300px;top:375px;width:1px;height:160px;background:#dcdcdc"></div>
<div class="a" style="left:425px;top:375px;width:1px;height:160px;background:#dcdcdc"></div>
<div class="a" style="left:833px;top:375px;width:1px;height:160px;background:#dcdcdc"></div>
<div class="a" style="left:958px;top:375px;width:1px;height:160px;background:#dcdcdc"></div>
<div class="a" style="left:1083px;top:375px;width:1px;height:160px;background:#dcdcdc"></div>
<div class="a" style="left:1208px;top:375px;width:1px;height:160px;background:#dcdcdc"></div>
<div class="a" style="left:1333px;top:375px;width:1px;height:160px;background:#dcdcdc"></div>
<div class="a" style="left:1458px;top:375px;width:1px;height:160px;background:#dcdcdc"></div>
<div class="a" style="left:1583px;top:375px;width:1px;height:160px;background:#dcdcdc"></div>
<div class="a" style="left:1708px;top:375px;width:1px;height:160px;background:#dcdcdc"></div>
<span class="t" style="left:238px;top:427px;width:63px;text-align:center;font-size:15px;color:#333">1</span>
<span class="t" style="left:238px;top:467px;width:63px;text-align:center;font-size:15px;color:#333">2</span>
<span class="t" style="left:238px;top:507px;width:63px;text-align:center;font-size:15px;color:#333">3</span>
<svg class="a" style="left:260px;top:386px" width="18" height="18" viewBox="0 0 18 18"><path d="M14.90 9.00L14.94 9.31L15.06 9.64L15.23 9.99L15.45 10.37L15.66 10.79L15.86 11.23L15.99 11.68L16.04 12.14L16.00 12.56L15.84 12.95L15.58 13.28L15.24 13.53L14.82 13.71L14.36 13.82L13.88 13.88L13.41 13.90L12.97 13.91L12.58 13.93L12.24 13.99L11.95 14.11L11.70 14.30L11.48 14.56L11.26 14.89L11.04 15.27L10.79 15.66L10.50 16.05L10.17 16.40L9.81 16.67L9.41 16.84L9.00 16.90L8.59 16.84L8.19 16.67L7.83 16.40L7.50 16.05L7.21 15.66L6.96 15.27L6.74 14.89L6.52 14.56L6.30 14.30L6.05 14.11L5.76 13.99L5.42 13.93L5.03 13.91L4.59 13.90L4.12 13.88L3.64 13.82L3.18 13.71L2.76 13.53L2.42 13.28L2.16 12.95L2.00 12.56L1.96 12.14L2.01 11.68L2.14 11.23L2.34 10.79L2.55 10.37L2.77 9.99L2.94 9.64L3.06 9.31L3.10 9.00L3.06 8.69L2.94 8.36L2.77 8.01L2.55 7.63L2.34 7.21L2.14 6.77L2.01 6.32L1.96 5.86L2.00 5.44L2.16 5.05L2.42 4.72L2.76 4.47L3.18 4.29L3.64 4.18L4.12 4.12L4.59 4.10L5.03 4.09L5.42 4.07L5.76 4.01L6.05 3.89L6.30 3.70L6.52 3.44L6.74 3.11L6.96 2.73L7.21 2.34L7.50 1.95L7.83 1.60L8.19 1.33L8.59 1.16L9.00 1.10L9.41 1.16L9.81 1.33L10.17 1.60L10.50 1.95L10.79 2.34L11.04 2.73L11.26 3.11L11.48 3.44L11.70 3.70L11.95 3.89L12.24 4.01L12.58 4.07L12.97 4.09L13.41 4.10L13.88 4.12L14.36 4.18L14.82 4.29L15.24 4.47L15.58 4.72L15.84 5.05L16.00 5.44L16.04 5.86L15.99 6.32L15.86 6.77L15.66 7.21L15.45 7.63L15.23 8.01L15.06 8.36L14.94 8.69Z" stroke="#333" stroke-width="1.3" fill="none" stroke-linejoin="round"/><circle cx="9" cy="9" r="2.6" stroke="#333" stroke-width="1.4" fill="none"/></svg>
<svg class="a" style="left:316px;top:389px" width="11" height="17" viewBox="0 0 11 17"><path d="M5.5 0.8L10.5 6.4H0.5z" fill="#bbb"/><path d="M5.5 16.2L10.5 10.6H0.5z" fill="#bbb"/></svg><span class="t" style="left:334px;top:391px;font-size:18px;font-weight:bold;color:#f00">*</span><span class="t" style="left:345px;top:390px;font-size:15px;font-weight:bold;color:#333">父件仓库</span>
<svg class="a" style="left:441px;top:389px" width="11" height="17" viewBox="0 0 11 17"><path d="M5.5 0.8L10.5 6.4H0.5z" fill="#bbb"/><path d="M5.5 16.2L10.5 10.6H0.5z" fill="#bbb"/></svg><span class="t" style="left:459px;top:391px;font-size:18px;font-weight:bold;color:#f00">*</span><span class="t" style="left:470px;top:390px;font-size:15px;font-weight:bold;color:#333">父件商品</span><svg class="a" style="left:531px;top:389px" width="16" height="16" viewBox="0 0 16 16"><circle cx="8" cy="8" r="6.8" stroke="#333" stroke-width="1.5" fill="none"/><path d="M5.9 6.3a2.1 2.1 0 1 1 3 1.9c-0.6 0.35-0.9 0.8-0.9 1.5" stroke="#333" stroke-width="1.4" fill="none"/><circle cx="8" cy="11.8" r="0.9" fill="#333"/></svg>
<svg class="a" style="left:849px;top:389px" width="11" height="17" viewBox="0 0 11 17"><path d="M5.5 0.8L10.5 6.4H0.5z" fill="#bbb"/><path d="M5.5 16.2L10.5 10.6H0.5z" fill="#bbb"/></svg><span class="t" style="left:866px;top:390px;font-size:15px;font-weight:bold;color:#333">规格型号</span>
<svg class="a" style="left:974px;top:389px" width="11" height="17" viewBox="0 0 11 17"><path d="M5.5 0.8L10.5 6.4H0.5z" fill="#bbb"/><path d="M5.5 16.2L10.5 10.6H0.5z" fill="#bbb"/></svg><span class="t" style="left:991px;top:390px;font-size:15px;font-weight:bold;color:#333">计量单位</span>
<svg class="a" style="left:1099px;top:389px" width="11" height="17" viewBox="0 0 11 17"><path d="M5.5 0.8L10.5 6.4H0.5z" fill="#bbb"/><path d="M5.5 16.2L10.5 10.6H0.5z" fill="#bbb"/></svg><span class="t" style="left:1120px;top:391px;font-size:18px;font-weight:bold;color:#f00">*</span><span class="t" style="left:1131px;top:390px;font-size:15px;font-weight:bold;color:#333">生产数量</span>
<svg class="a" style="left:1224px;top:389px" width="11" height="17" viewBox="0 0 11 17"><path d="M5.5 0.8L10.5 6.4H0.5z" fill="#bbb"/><path d="M5.5 16.2L10.5 10.6H0.5z" fill="#bbb"/></svg><span class="t" style="left:1245px;top:391px;font-size:18px;font-weight:bold;color:#f00">*</span><span class="t" style="left:1256px;top:390px;font-size:15px;font-weight:bold;color:#333">成本单价</span>
<svg class="a" style="left:1349px;top:389px" width="11" height="17" viewBox="0 0 11 17"><path d="M5.5 0.8L10.5 6.4H0.5z" fill="#bbb"/><path d="M5.5 16.2L10.5 10.6H0.5z" fill="#bbb"/></svg><span class="t" style="left:1370px;top:391px;font-size:18px;font-weight:bold;color:#f00">*</span><span class="t" style="left:1381px;top:390px;font-size:15px;font-weight:bold;color:#333">成本金额</span>
<svg class="a" style="left:1474px;top:389px" width="11" height="17" viewBox="0 0 11 17"><path d="M5.5 0.8L10.5 6.4H0.5z" fill="#bbb"/><path d="M5.5 16.2L10.5 10.6H0.5z" fill="#bbb"/></svg><span class="t" style="left:1507px;top:390px;font-size:15px;font-weight:bold;color:#333">费用金额</span>
<svg class="a" style="left:1599px;top:389px" width="11" height="17" viewBox="0 0 11 17"><path d="M5.5 0.8L10.5 6.4H0.5z" fill="#bbb"/><path d="M5.5 16.2L10.5 10.6H0.5z" fill="#bbb"/></svg><span class="t" style="left:1616px;top:390px;font-size:15px;font-weight:bold;color:#333">收入合同</span>
<div class="a" style="left:238px;top:535px;width:1611px;height:1px;background:#dcdcdc"></div>
<div class="a" style="left:300px;top:535px;width:1px;height:18px;background:#dcdcdc"></div>
<div class="a" style="left:304px;top:539px;width:1311px;height:11px;border-radius:6px;background:#b0b0b0"></div>
<div class="a" style="left:1710px;top:375px;width:14px;height:160px;background:linear-gradient(to right,rgba(0,0,0,0),rgba(0,0,0,0.05))"></div>
<div class="a" style="left:1721px;top:375px;width:3px;height:160px;background:#fafafa"></div>
<div class="a" style="left:1724px;top:375px;width:125px;height:178px;background:#fff;border-left:1px solid #eee;border-right:1px solid #dcdcdc;border-bottom:1px solid #dcdcdc"></div>
<div class="a" style="left:1724px;top:375px;width:124px;height:40px;background:#e6eaf4"></div>
<span class="t" style="left:1772px;top:388px;font-size:15px;font-weight:bold;color:#333">操作</span>
<svg class="a" style="left:1762px;top:428px" width="15" height="16" viewBox="0 0 15 16"><path d="M0.8 4.3h13.4M5.2 4V3a2.3 2.3 0 0 1 4.6 0V4M2 4.5v8.3a2.2 2.2 0 0 0 2.2 2.2h6.6a2.2 2.2 0 0 0 2.2-2.2V4.5M5 8.3v4.2M7.5 8.3v4.2M10 8.3v4.2" stroke="#555" stroke-width="1.3" fill="none"/></svg><svg class="a" style="left:1796px;top:428px" width="16" height="16" viewBox="0 0 16 16"><path d="M11.8 2.3A1.8 1.8 0 0 0 10 1H3.2A2.2 2.2 0 0 0 1 3.2V10a1.9 1.9 0 0 0 1.4 1.8" stroke="#555" stroke-width="1.2" fill="none"/><rect x="3.6" y="3.4" width="11" height="11.6" rx="2.2" stroke="#555" stroke-width="1.3" fill="#fff"/><path d="M9.1 6.4v6M6.1 9.4h6" stroke="#555" stroke-width="1.3"/></svg>
<div class="a" style="left:1724px;top:454px;width:125px;height:1px;background:#dcdcdc"></div>
<svg class="a" style="left:1762px;top:468px" width="15" height="16" viewBox="0 0 15 16"><path d="M0.8 4.3h13.4M5.2 4V3a2.3 2.3 0 0 1 4.6 0V4M2 4.5v8.3a2.2 2.2 0 0 0 2.2 2.2h6.6a2.2 2.2 0 0 0 2.2-2.2V4.5M5 8.3v4.2M7.5 8.3v4.2M10 8.3v4.2" stroke="#555" stroke-width="1.3" fill="none"/></svg><svg class="a" style="left:1796px;top:468px" width="16" height="16" viewBox="0 0 16 16"><path d="M11.8 2.3A1.8 1.8 0 0 0 10 1H3.2A2.2 2.2 0 0 0 1 3.2V10a1.9 1.9 0 0 0 1.4 1.8" stroke="#555" stroke-width="1.2" fill="none"/><rect x="3.6" y="3.4" width="11" height="11.6" rx="2.2" stroke="#555" stroke-width="1.3" fill="#fff"/><path d="M9.1 6.4v6M6.1 9.4h6" stroke="#555" stroke-width="1.3"/></svg>
<div class="a" style="left:1724px;top:494px;width:125px;height:1px;background:#dcdcdc"></div>
<svg class="a" style="left:1762px;top:508px" width="15" height="16" viewBox="0 0 15 16"><path d="M0.8 4.3h13.4M5.2 4V3a2.3 2.3 0 0 1 4.6 0V4M2 4.5v8.3a2.2 2.2 0 0 0 2.2 2.2h6.6a2.2 2.2 0 0 0 2.2-2.2V4.5M5 8.3v4.2M7.5 8.3v4.2M10 8.3v4.2" stroke="#555" stroke-width="1.3" fill="none"/></svg><svg class="a" style="left:1796px;top:508px" width="16" height="16" viewBox="0 0 16 16"><path d="M11.8 2.3A1.8 1.8 0 0 0 10 1H3.2A2.2 2.2 0 0 0 1 3.2V10a1.9 1.9 0 0 0 1.4 1.8" stroke="#555" stroke-width="1.2" fill="none"/><rect x="3.6" y="3.4" width="11" height="11.6" rx="2.2" stroke="#555" stroke-width="1.3" fill="#fff"/><path d="M9.1 6.4v6M6.1 9.4h6" stroke="#555" stroke-width="1.3"/></svg>
<div class="a" style="left:1723px;top:535px;width:126px;height:1px;background:#dcdcdc"></div>
<div class="a" style="left:1723px;top:535px;width:1px;height:18px;background:#dcdcdc"></div>
<div class="a" style="left:238px;top:557px;width:1611px;height:200px;background:#fff;border:1px solid #dcdcdc;border-top:none"></div>
<div class="a" style="left:238px;top:557px;width:1611px;height:40px;background:#e6eaf4"></div>
<div class="a" style="left:238px;top:636px;width:1611px;height:1px;background:#dcdcdc"></div>
<div class="a" style="left:238px;top:676px;width:1611px;height:1px;background:#dcdcdc"></div>
<div class="a" style="left:300px;top:557px;width:1px;height:182px;background:#dcdcdc"></div>
<div class="a" style="left:425px;top:557px;width:1px;height:182px;background:#dcdcdc"></div>
<div class="a" style="left:550px;top:557px;width:1px;height:182px;background:#dcdcdc"></div>
<div class="a" style="left:675px;top:557px;width:1px;height:182px;background:#dcdcdc"></div>
<div class="a" style="left:875px;top:557px;width:1px;height:182px;background:#dcdcdc"></div>
<div class="a" style="left:1000px;top:557px;width:1px;height:182px;background:#dcdcdc"></div>
<div class="a" style="left:1125px;top:557px;width:1px;height:182px;background:#dcdcdc"></div>
<div class="a" style="left:1250px;top:557px;width:1px;height:182px;background:#dcdcdc"></div>
<div class="a" style="left:1460px;top:557px;width:1px;height:182px;background:#dcdcdc"></div>
<div class="a" style="left:1585px;top:557px;width:1px;height:182px;background:#dcdcdc"></div>
<div class="a" style="left:1710px;top:557px;width:1px;height:182px;background:#dcdcdc"></div>
<span class="t" style="left:238px;top:609px;width:63px;text-align:center;font-size:15px;color:#333">1</span>
<span class="t" style="left:238px;top:649px;width:63px;text-align:center;font-size:15px;color:#333">2</span>
<span class="t" style="left:238px;top:689px;width:63px;text-align:center;font-size:15px;color:#333">3</span>
<div class="a" style="left:239px;top:699px;width:1609px;height:40px;background:#fcf0da"></div>
<div class="a" style="left:300px;top:699px;width:1px;height:40px;background:#e6ddd0"></div>
<div class="a" style="left:425px;top:699px;width:1px;height:40px;background:#e6ddd0"></div>
<div class="a" style="left:550px;top:699px;width:1px;height:40px;background:#e6ddd0"></div>
<div class="a" style="left:675px;top:699px;width:1px;height:40px;background:#e6ddd0"></div>
<div class="a" style="left:875px;top:699px;width:1px;height:40px;background:#e6ddd0"></div>
<div class="a" style="left:1000px;top:699px;width:1px;height:40px;background:#e6ddd0"></div>
<div class="a" style="left:1125px;top:699px;width:1px;height:40px;background:#e6ddd0"></div>
<div class="a" style="left:1250px;top:699px;width:1px;height:40px;background:#e6ddd0"></div>
<div class="a" style="left:1460px;top:699px;width:1px;height:40px;background:#e6ddd0"></div>
<div class="a" style="left:1585px;top:699px;width:1px;height:40px;background:#e6ddd0"></div>
<div class="a" style="left:1710px;top:699px;width:1px;height:40px;background:#e6ddd0"></div>
<span class="t" style="left:238px;top:712px;width:63px;text-align:center;font-size:15px;color:#333">小计</span>
<span class="t" style="left:1175px;top:712px;width:60px;text-align:right;font-size:16px;font-weight:bold;color:#222">0.00</span>
<span class="t" style="left:1510px;top:712px;width:60px;text-align:right;font-size:16px;font-weight:bold;color:#222">0.00</span>
<span class="t" style="left:1635px;top:712px;width:60px;text-align:right;font-size:16px;font-weight:bold;color:#222">0.00</span>
<div class="a" style="left:238px;top:739px;width:1611px;height:1px;background:#dcdcdc"></div>
<svg class="a" style="left:260px;top:568px" width="18" height="18" viewBox="0 0 18 18"><path d="M14.90 9.00L14.94 9.31L15.06 9.64L15.23 9.99L15.45 10.37L15.66 10.79L15.86 11.23L15.99 11.68L16.04 12.14L16.00 12.56L15.84 12.95L15.58 13.28L15.24 13.53L14.82 13.71L14.36 13.82L13.88 13.88L13.41 13.90L12.97 13.91L12.58 13.93L12.24 13.99L11.95 14.11L11.70 14.30L11.48 14.56L11.26 14.89L11.04 15.27L10.79 15.66L10.50 16.05L10.17 16.40L9.81 16.67L9.41 16.84L9.00 16.90L8.59 16.84L8.19 16.67L7.83 16.40L7.50 16.05L7.21 15.66L6.96 15.27L6.74 14.89L6.52 14.56L6.30 14.30L6.05 14.11L5.76 13.99L5.42 13.93L5.03 13.91L4.59 13.90L4.12 13.88L3.64 13.82L3.18 13.71L2.76 13.53L2.42 13.28L2.16 12.95L2.00 12.56L1.96 12.14L2.01 11.68L2.14 11.23L2.34 10.79L2.55 10.37L2.77 9.99L2.94 9.64L3.06 9.31L3.10 9.00L3.06 8.69L2.94 8.36L2.77 8.01L2.55 7.63L2.34 7.21L2.14 6.77L2.01 6.32L1.96 5.86L2.00 5.44L2.16 5.05L2.42 4.72L2.76 4.47L3.18 4.29L3.64 4.18L4.12 4.12L4.59 4.10L5.03 4.09L5.42 4.07L5.76 4.01L6.05 3.89L6.30 3.70L6.52 3.44L6.74 3.11L6.96 2.73L7.21 2.34L7.50 1.95L7.83 1.60L8.19 1.33L8.59 1.16L9.00 1.10L9.41 1.16L9.81 1.33L10.17 1.60L10.50 1.95L10.79 2.34L11.04 2.73L11.26 3.11L11.48 3.44L11.70 3.70L11.95 3.89L12.24 4.01L12.58 4.07L12.97 4.09L13.41 4.10L13.88 4.12L14.36 4.18L14.82 4.29L15.24 4.47L15.58 4.72L15.84 5.05L16.00 5.44L16.04 5.86L15.99 6.32L15.86 6.77L15.66 7.21L15.45 7.63L15.23 8.01L15.06 8.36L14.94 8.69Z" stroke="#333" stroke-width="1.3" fill="none" stroke-linejoin="round"/><circle cx="9" cy="9" r="2.6" stroke="#333" stroke-width="1.4" fill="none"/></svg>
<svg class="a" style="left:316px;top:571px" width="11" height="17" viewBox="0 0 11 17"><path d="M5.5 0.8L10.5 6.4H0.5z" fill="#bbb"/><path d="M5.5 16.2L10.5 10.6H0.5z" fill="#bbb"/></svg><span class="t" style="left:334px;top:572px;font-size:15px;font-weight:bold;color:#333">父件规格...</span>
<svg class="a" style="left:441px;top:571px" width="11" height="17" viewBox="0 0 11 17"><path d="M5.5 0.8L10.5 6.4H0.5z" fill="#bbb"/><path d="M5.5 16.2L10.5 10.6H0.5z" fill="#bbb"/></svg><span class="t" style="left:459px;top:572px;font-size:15px;font-weight:bold;color:#333">父件编码</span>
<svg class="a" style="left:566px;top:571px" width="11" height="17" viewBox="0 0 11 17"><path d="M5.5 0.8L10.5 6.4H0.5z" fill="#bbb"/><path d="M5.5 16.2L10.5 10.6H0.5z" fill="#bbb"/></svg><span class="t" style="left:584px;top:572px;font-size:15px;font-weight:bold;color:#333">父件名称</span>
<svg class="a" style="left:691px;top:571px" width="11" height="17" viewBox="0 0 11 17"><path d="M5.5 0.8L10.5 6.4H0.5z" fill="#bbb"/><path d="M5.5 16.2L10.5 10.6H0.5z" fill="#bbb"/></svg><span class="t" style="left:708px;top:573px;font-size:18px;font-weight:bold;color:#f00">*</span><span class="t" style="left:719px;top:572px;font-size:15px;font-weight:bold;color:#333">子件商品</span><svg class="a" style="left:780px;top:571px" width="16" height="16" viewBox="0 0 16 16"><circle cx="8" cy="8" r="6.8" stroke="#333" stroke-width="1.5" fill="none"/><path d="M5.9 6.3a2.1 2.1 0 1 1 3 1.9c-0.6 0.35-0.9 0.8-0.9 1.5" stroke="#333" stroke-width="1.4" fill="none"/><circle cx="8" cy="11.8" r="0.9" fill="#333"/></svg><div class="a" style="left:803px;top:567px;width:67px;height:23px;border-radius:5px;background:#6aa6f7"></div><span class="t" style="left:805px;top:571px;font-size:15px;color:#fff">扫码录入</span>
<svg class="a" style="left:891px;top:571px" width="11" height="17" viewBox="0 0 11 17"><path d="M5.5 0.8L10.5 6.4H0.5z" fill="#bbb"/><path d="M5.5 16.2L10.5 10.6H0.5z" fill="#bbb"/></svg><span class="t" style="left:908px;top:572px;font-size:15px;font-weight:bold;color:#333">规格型号</span>
<svg class="a" style="left:1016px;top:571px" width="11" height="17" viewBox="0 0 11 17"><path d="M5.5 0.8L10.5 6.4H0.5z" fill="#bbb"/><path d="M5.5 16.2L10.5 10.6H0.5z" fill="#bbb"/></svg><span class="t" style="left:1033px;top:573px;font-size:18px;font-weight:bold;color:#f00">*</span><span class="t" style="left:1044px;top:572px;font-size:15px;font-weight:bold;color:#333">计量单位</span>
<svg class="a" style="left:1141px;top:571px" width="11" height="17" viewBox="0 0 11 17"><path d="M5.5 0.8L10.5 6.4H0.5z" fill="#bbb"/><path d="M5.5 16.2L10.5 10.6H0.5z" fill="#bbb"/></svg><span class="t" style="left:1192px;top:573px;font-size:18px;font-weight:bold;color:#f00">*</span><span class="t" style="left:1203px;top:572px;font-size:15px;font-weight:bold;color:#333">数量</span>
<svg class="a" style="left:1266px;top:571px" width="11" height="17" viewBox="0 0 11 17"><path d="M5.5 0.8L10.5 6.4H0.5z" fill="#bbb"/><path d="M5.5 16.2L10.5 10.6H0.5z" fill="#bbb"/></svg><span class="t" style="left:1352px;top:573px;font-size:18px;font-weight:bold;color:#f00">*</span><span class="t" style="left:1363px;top:572px;font-size:15px;font-weight:bold;color:#333">成本单价</span><svg class="a" style="left:1429px;top:570px" width="16" height="16" viewBox="0 0 16 16"><circle cx="8" cy="8" r="6.8" stroke="#333" stroke-width="1.5" fill="none"/><path d="M5.9 6.3a2.1 2.1 0 1 1 3 1.9c-0.6 0.35-0.9 0.8-0.9 1.5" stroke="#333" stroke-width="1.4" fill="none"/><circle cx="8" cy="11.8" r="0.9" fill="#333"/></svg>
<svg class="a" style="left:1476px;top:571px" width="11" height="17" viewBox="0 0 11 17"><path d="M5.5 0.8L10.5 6.4H0.5z" fill="#bbb"/><path d="M5.5 16.2L10.5 10.6H0.5z" fill="#bbb"/></svg><span class="t" style="left:1497px;top:573px;font-size:18px;font-weight:bold;color:#f00">*</span><span class="t" style="left:1508px;top:572px;font-size:15px;font-weight:bold;color:#333">成本金额</span>
<svg class="a" style="left:1601px;top:571px" width="11" height="17" viewBox="0 0 11 17"><path d="M5.5 0.8L10.5 6.4H0.5z" fill="#bbb"/><path d="M5.5 16.2L10.5 10.6H0.5z" fill="#bbb"/></svg><span class="t" style="left:1634px;top:572px;font-size:15px;font-weight:bold;color:#333">费用金额</span>
<div class="a" style="left:238px;top:739px;width:1611px;height:1px;background:#dcdcdc"></div>
<div class="a" style="left:300px;top:739px;width:1px;height:18px;background:#dcdcdc"></div>
<div class="a" style="left:304px;top:743px;width:1211px;height:11px;border-radius:6px;background:#b0b0b0"></div>
<div class="a" style="left:1710px;top:557px;width:14px;height:182px;background:linear-gradient(to right,rgba(0,0,0,0),rgba(0,0,0,0.05))"></div>
<div class="a" style="left:1721px;top:557px;width:3px;height:182px;background:#fafafa"></div>
<div class="a" style="left:1724px;top:557px;width:125px;height:200px;background:#fff;border-left:1px solid #eee;border-right:1px solid #dcdcdc;border-bottom:1px solid #dcdcdc"></div>
<div class="a" style="left:1724px;top:557px;width:124px;height:40px;background:#e6eaf4"></div>
<span class="t" style="left:1772px;top:570px;font-size:15px;font-weight:bold;color:#333">操作</span>
<svg class="a" style="left:1762px;top:610px" width="15" height="16" viewBox="0 0 15 16"><path d="M0.8 4.3h13.4M5.2 4V3a2.3 2.3 0 0 1 4.6 0V4M2 4.5v8.3a2.2 2.2 0 0 0 2.2 2.2h6.6a2.2 2.2 0 0 0 2.2-2.2V4.5M5 8.3v4.2M7.5 8.3v4.2M10 8.3v4.2" stroke="#555" stroke-width="1.3" fill="none"/></svg><svg class="a" style="left:1796px;top:610px" width="16" height="16" viewBox="0 0 16 16"><path d="M11.8 2.3A1.8 1.8 0 0 0 10 1H3.2A2.2 2.2 0 0 0 1 3.2V10a1.9 1.9 0 0 0 1.4 1.8" stroke="#555" stroke-width="1.2" fill="none"/><rect x="3.6" y="3.4" width="11" height="11.6" rx="2.2" stroke="#555" stroke-width="1.3" fill="#fff"/><path d="M9.1 6.4v6M6.1 9.4h6" stroke="#555" stroke-width="1.3"/></svg>
<div class="a" style="left:1724px;top:636px;width:125px;height:1px;background:#dcdcdc"></div>
<svg class="a" style="left:1762px;top:650px" width="15" height="16" viewBox="0 0 15 16"><path d="M0.8 4.3h13.4M5.2 4V3a2.3 2.3 0 0 1 4.6 0V4M2 4.5v8.3a2.2 2.2 0 0 0 2.2 2.2h6.6a2.2 2.2 0 0 0 2.2-2.2V4.5M5 8.3v4.2M7.5 8.3v4.2M10 8.3v4.2" stroke="#555" stroke-width="1.3" fill="none"/></svg><svg class="a" style="left:1796px;top:650px" width="16" height="16" viewBox="0 0 16 16"><path d="M11.8 2.3A1.8 1.8 0 0 0 10 1H3.2A2.2 2.2 0 0 0 1 3.2V10a1.9 1.9 0 0 0 1.4 1.8" stroke="#555" stroke-width="1.2" fill="none"/><rect x="3.6" y="3.4" width="11" height="11.6" rx="2.2" stroke="#555" stroke-width="1.3" fill="#fff"/><path d="M9.1 6.4v6M6.1 9.4h6" stroke="#555" stroke-width="1.3"/></svg>
<div class="a" style="left:1724px;top:676px;width:125px;height:1px;background:#dcdcdc"></div>
<svg class="a" style="left:1762px;top:690px" width="15" height="16" viewBox="0 0 15 16"><path d="M0.8 4.3h13.4M5.2 4V3a2.3 2.3 0 0 1 4.6 0V4M2 4.5v8.3a2.2 2.2 0 0 0 2.2 2.2h6.6a2.2 2.2 0 0 0 2.2-2.2V4.5M5 8.3v4.2M7.5 8.3v4.2M10 8.3v4.2" stroke="#555" stroke-width="1.3" fill="none"/></svg><svg class="a" style="left:1796px;top:690px" width="16" height="16" viewBox="0 0 16 16"><path d="M11.8 2.3A1.8 1.8 0 0 0 10 1H3.2A2.2 2.2 0 0 0 1 3.2V10a1.9 1.9 0 0 0 1.4 1.8" stroke="#555" stroke-width="1.2" fill="none"/><rect x="3.6" y="3.4" width="11" height="11.6" rx="2.2" stroke="#555" stroke-width="1.3" fill="#fff"/><path d="M9.1 6.4v6M6.1 9.4h6" stroke="#555" stroke-width="1.3"/></svg>
<div class="a" style="left:1724px;top:699px;width:124px;height:40px;background:#fcf0da;box-shadow:0 -3px 6px rgba(0,0,0,0.07), 0 2px 4px rgba(0,0,0,0.08)"></div>
<div class="a" style="left:1724px;top:739px;width:125px;height:1px;background:#dcdcdc"></div>
<div class="a" style="left:1723px;top:739px;width:126px;height:1px;background:#dcdcdc"></div>
<div class="a" style="left:1723px;top:739px;width:1px;height:18px;background:#dcdcdc"></div>
<div class="a" style="left:1838px;top:600px;width:10px;height:36px;border-radius:5px;background:#b8b8b8"></div>
<!-- /TABLES -->
<!-- BOTTOM -->
<div class="a" style="left:213px;top:782px;width:1661px;height:120px;background:#fff"></div>
<div class="a" style="left:322px;top:782px;width:1px;height:59px;background:#e3e3e3"></div>
<svg class="a" style="left:245px;top:790px" width="50" height="52" viewBox="0 0 50 52"><circle cx="23.5" cy="22.5" r="11" fill="#e6eefb"/><path d="M13.7 10.4H10V43.4H40V10.4H36.3" stroke="#3dd0a6" stroke-width="2.6" fill="none"/><path d="M16.6 7v6.4M25 7v6.4M33.3 7v6.4" stroke="#3dd0a6" stroke-width="2.8"/><circle cx="21" cy="10.7" r="1.1" fill="#3dd0a6"/><circle cx="29" cy="10.7" r="1.1" fill="#3dd0a6"/><path d="M15.2 17.5h19.6M15.2 24.5h19.6M15.2 31.3h19.6M15.2 37.8h11" stroke="#3dd0a6" stroke-width="2.7"/></svg>
<span class="t" style="left:343px;top:818px;font-size:15px;color:#c4c4c4">请输入备注信息</span>
<!-- page scrollbar -->
<div class="a" style="left:1899px;top:119px;width:21px;height:722px;background:#f1f1f1"></div>
<div class="a" style="left:1901px;top:140px;width:17px;height:637px;background:#c1c1c1"></div>
<svg class="a" style="left:1904px;top:126px" width="11" height="8"><path d="M0.5 7L5.5 1 10.5 7z" fill="#a3a3a3"/></svg>
<svg class="a" style="left:1904px;top:825px" width="11" height="8"><path d="M0.5 1L5.5 7 10.5 1z" fill="#505050"/></svg>
<!-- bottom bar -->
<div class="a" style="left:213px;top:841px;width:1682px;height:61px;background:#fff;box-shadow:0 -3px 8px rgba(0,0,0,0.07)"></div>
<div class="a" style="left:1416px;top:850px;width:102px;height:45px;border:1px solid #c9c9c9;border-radius:3px;background:#fff"></div>
<span class="t" style="left:1446px;top:862px;font-size:20px;color:#333">放弃</span>
<div class="a" style="left:1533px;top:850px;width:142px;height:45px;border:1px solid #6ea6f5;border-radius:3px;background:#fff"></div>
<span class="t" style="left:1564px;top:862px;font-size:20px;color:#6ea6f5">保存草稿</span>
<div class="a" style="left:1690px;top:849px;width:178px;height:45px;border-radius:4px;background:#6aa6f7"></div>
<span class="t" style="left:1719px;top:861px;font-size:20px;color:#fff">保存&amp;新增</span>
<svg class="a" style="left:1823px;top:866px" width="14" height="9"><path d="M1 8l6-6 6 6" stroke="#fff" stroke-width="1.6" fill="none"/></svg>
<!-- side float panel -->
<div class="a" style="left:1876px;top:304px;width:44px;height:45px;background:#fff;box-shadow:-4px 0 10px rgba(0,0,0,0.08)"></div>
<div class="a" style="left:1876px;top:353px;width:44px;height:45px;background:#fff;box-shadow:-4px 0 10px rgba(0,0,0,0.08)"></div>
<div class="a" style="left:1876px;top:403px;width:44px;height:89px;background:#fff;box-shadow:-4px 0 10px rgba(0,0,0,0.08)"></div>
<div class="a" style="left:1876px;top:447px;width:44px;height:1px;background:#eee"></div>
<svg class="a" style="left:1887px;top:315px" width="24" height="25" viewBox="0 0 24 25"><path d="M16 23.5H4a3 3 0 0 1-3-3V4a3 3 0 0 1 3-3h16a3 3 0 0 1 3 3v12.5z" stroke="#444" stroke-width="1.3" fill="none" stroke-linejoin="round"/><path d="M16 23.5v-3.5a3 3 0 0 1 3-3h4" stroke="#444" stroke-width="1.2" fill="none"/></svg><span class="t" style="left:1892px;top:320px;font-size:13px;color:#444">草</span>
<svg class="a" style="left:1886px;top:365px" width="25" height="25" viewBox="3.5 3.5 18 18"><g transform="rotate(45 12.5 12.5)"><path d="M15.5 8v9.5a3.5 3.5 0 0 1-7 0V6a2.5 2.5 0 0 1 5 0v9.5" stroke="#444" stroke-width="1.05" fill="none" stroke-linecap="round" transform="translate(0 0.5)"/></g></svg>
<svg class="a" style="left:1886px;top:414px" width="26" height="24" viewBox="0 0 26 24"><path d="M1.5 16v6h5M19.5 2h5v6" stroke="#555" stroke-width="2" fill="none"/><text x="13" y="17" font-size="16" font-weight="bold" fill="#555" text-anchor="middle">父</text></svg>
<svg class="a" style="left:1886px;top:459px" width="26" height="24" viewBox="0 0 26 24"><path d="M1.5 16v6h5M19.5 2h5v6" stroke="#555" stroke-width="2" fill="none"/><text x="13" y="18" font-size="16" font-weight="bold" fill="#555" text-anchor="middle">子</text></svg>
</body></html>
